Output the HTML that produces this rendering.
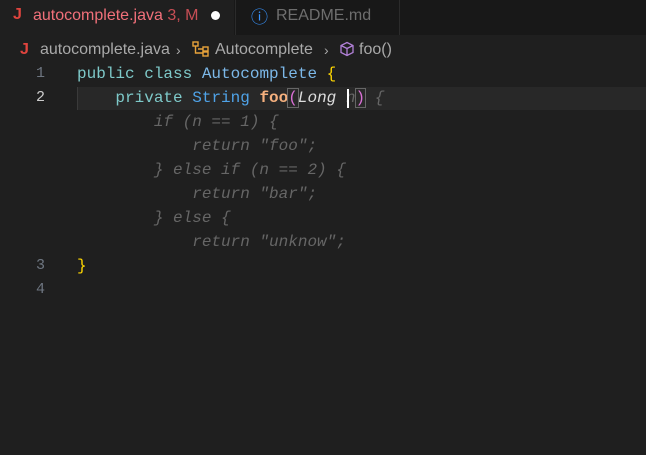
<!DOCTYPE html>
<html><head><style>
body{margin:0;width:646px;height:455px;background:#1f1f1f;overflow:hidden;font-family:"Liberation Sans",sans-serif;position:relative}
.tabs{position:absolute;left:0;top:0;width:646px;height:35px;background:#181818}
.tab1{position:absolute;left:0;top:0;width:234px;height:35px;background:#1f1f1f}
.tab2{position:absolute;left:235px;top:0;width:163px;height:35px;background:#181818;border-right:1px solid #2b2b2b;border-left:1px solid #2b2b2b}
.t{position:absolute;font-size:16px;top:7px;white-space:nowrap}
.bc{position:absolute;top:41px;font-size:16px;color:#a9a9a9;white-space:nowrap}
.code{position:absolute;left:0;top:62px;font-family:"Liberation Mono",monospace;font-size:16px;line-height:24px;white-space:pre}
.ln{position:absolute;left:0;width:45px;text-align:right;color:#6e7681;font-family:"Liberation Mono",monospace;font-size:15px;line-height:24px}
.hl{position:absolute;left:77px;top:87px;width:569px;height:23px;background:#282828;border-left:1px solid #3a3a3a}
.k{color:#569cd6}.g{color:#666;font-style:italic}
</style></head><body>
<div class="tabs"><div class="tab1"></div><div class="tab2"></div></div>
<div class="t" style="left:13px;color:#e0443e;font-weight:bold;font-size:16px;top:6px">J</div>
<div class="t" style="left:33px;color:#f1707a">autocomplete.java <span style="color:#c74e55">3, M</span></div>
<div style="position:absolute;left:211px;top:11px;width:9px;height:9px;border-radius:50%;background:#fff"></div>
<div class="t" style="left:251px;color:#3794ff;font-size:17px;top:3px">ⓘ</div>
<div class="t" style="left:276px;color:#6e6e6e">README.md</div>
<div class="bc" style="left:20px;color:#e0443e;font-weight:bold">J</div>
<div class="bc" style="left:40px">autocomplete.java</div>
<div class="bc" style="left:176px;font-size:14px;top:42px">&#8250;</div>
<svg style="position:absolute;left:192px;top:41px" width="18" height="16" viewBox="0 0 18 16"><g fill="none" stroke="#e8a33b" stroke-width="1.4"><rect x="1" y="1" width="5" height="4"/><rect x="11" y="6" width="5" height="4"/><rect x="11" y="11" width="5" height="4"/><path d="M3.5 5v7h7.5M6 8h5"/></g></svg>
<div class="bc" style="left:215px">Autocomplete</div>
<div class="bc" style="left:324px;font-size:14px;top:42px">&#8250;</div>
<svg style="position:absolute;left:339px;top:41px" width="16" height="16" viewBox="0 0 16 16"><g fill="none" stroke="#b180d7" stroke-width="1.3"><path d="M8 1.5l6 3v7l-6 3-6-3v-7z M2 4.5l6 3 6-3 M8 7.5v7"/></g></svg>
<div class="bc" style="left:359px">foo()</div>
<div class="hl"></div>
<div class="ln" style="top:62px">1</div>
<div class="ln" style="top:86px;color:#ccc">2</div>
<div class="ln" style="top:254px">3</div>
<div class="ln" style="top:278px">4</div>
<div class="code" style="left:77px"><span class="k" style="color:#7ec9c9">public class</span> <span style="color:#7cb8e8">Autocomplete</span> <span style="color:#ffd700">{</span>
    <span style="color:#7ec9c9">private</span> <span class="k" style="color:#4fa3e8">String</span> <span style="color:#f5b07e;font-weight:bold">foo</span><span style="color:#da70d6;outline:1px solid #666">(</span><span style="color:#ddd;font-style:italic">Long </span><span class="g">n</span><span style="color:#da70d6;outline:1px solid #666">)</span> <span class="g">{</span>
<span class="g">        if (n == 1) {
            return "foo";
        } else if (n == 2) {
            return "bar";
        } else {
            return "unknow";</span>
<span style="color:#ffd700">}</span>
</div>
<div style="position:absolute;left:347px;top:89px;width:2px;height:19px;background:#fff"></div>
</body></html>
